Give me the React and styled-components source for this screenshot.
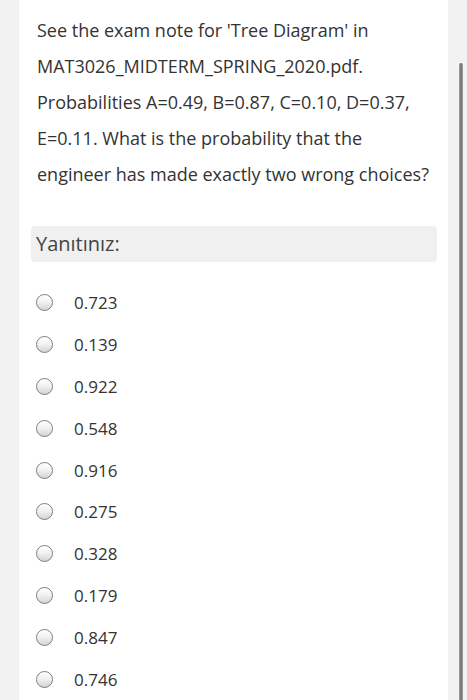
import styled, { createGlobalStyle } from 'styled-components';

const GlobalStyle = createGlobalStyle`
    html, body {
        margin: 0;
        padding: 0;
        background: #f2f2f2;
    }
    body {
        font-family: 'Open Sans', 'Noto Sans', sans-serif;
        color: #333;
    }
`;

const Page = styled.div`
    display: flex;
    height: 700px;
    overflow: hidden;
    padding-left: 19px;
`;

const Card = styled.div`
    width: 429px;
    background: #fff;
    padding: 12px 11px 0 12px;
    box-sizing: border-box;
`;

const Gutter = styled.div`
    flex: 1;
    display: flex;
    justify-content: flex-end;
    padding: 63px 4px 0 0;
`;

const Scrollbar = styled.div`
    width: 4px;
    height: 100%;
    border-radius: 2px 2px 0 0;
    background: linear-gradient(to right, #a6a6a6, #6e6e6e 50%, #a6a6a6);
`;

const Question = styled.p`
    margin: 0;
    padding-left: 6px;
    font-size: 18px;
    line-height: 36px;
    color: #333;
`;

const AnswerHead = styled.div`
    margin-top: 34px;
    height: 36px;
    background: #f0f0f0;
    border-radius: 4px;
    padding-left: 5px;
    font-size: 20px;
    line-height: 36px;
    color: #444;
`;

const Options = styled.div`
    margin-top: 20px;
    display: flex;
    flex-direction: column;
`;

const Option = styled.label`
    display: flex;
    align-items: center;
    height: 41.8px;
    padding-left: 5px;
    font-size: 17px;
    color: #333;
`;

const Radio = styled.span`
    width: 15px;
    height: 15px;
    border-radius: 50%;
    border: 1px solid #7d7d7d;
    background: linear-gradient(to bottom, #ffffff 0%, #f2f2f2 45%, #d4d4d4 100%);
    box-shadow: inset 0 1px 1px rgba(255, 255, 255, 0.9);
    margin-right: 21px;
    flex-shrink: 0;
`;

const answers = ['0.723', '0.139', '0.922', '0.548', '0.916', '0.275', '0.328', '0.179', '0.847', '0.746'];

const App = () => {
    return (
        <>
            <GlobalStyle />
            <Page>
                <Card>
                    <Question>
                        See the exam note for 'Tree Diagram' in
                        <br />
                        MAT3026_MIDTERM_SPRING_2020.pdf.
                        <br />
                        Probabilities A=0.49, B=0.87, C=0.10, D=0.37,
                        <br />
                        E=0.11. What is the probability that the
                        <br />
                        engineer has made exactly two wrong choices?
                    </Question>
                    <AnswerHead>Yanıtınız:</AnswerHead>
                    <Options>
                        {answers.map((a) => (
                            <Option key={a}>
                                <Radio />
                                {a}
                            </Option>
                        ))}
                    </Options>
                </Card>
                <Gutter>
                    <Scrollbar />
                </Gutter>
            </Page>
        </>
    );
};

export default App;
